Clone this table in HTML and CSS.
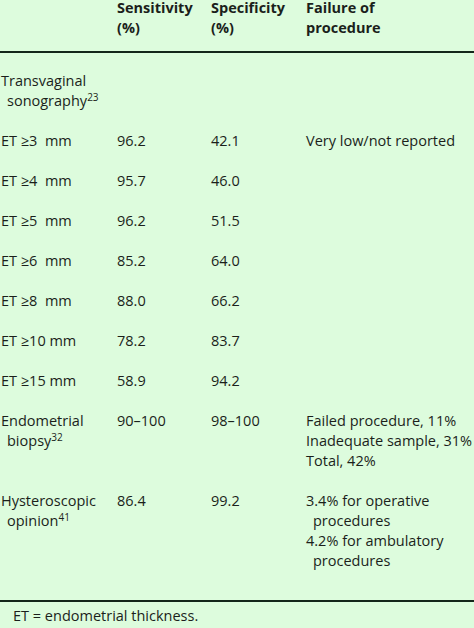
FILE: index.html
```html
<!DOCTYPE html>
<html>
<head>
<meta charset="utf-8">
<link rel="stylesheet" href="styles.css">
</head>
<body>
<table class="tbl">
  <colgroup>
    <col class="c1"><col class="c2"><col class="c3"><col class="c4">
  </colgroup>
  <thead>
    <tr>
      <th></th>
      <th>Sensitivity<br>(%)</th>
      <th>Specificity<br>(%)</th>
      <th>Failure of<br>procedure</th>
    </tr>
  </thead>
  <tbody>
    <tr class="first">
      <td class="lbl">Transvaginal sonography<sup>23</sup></td>
      <td></td><td></td><td></td>
    </tr>
    <tr><td class="lbl">ET ≥3&nbsp; mm</td><td>96.2</td><td>42.1</td><td class="fail"><span class="item">Very low/not reported</span></td></tr>
    <tr><td class="lbl">ET ≥4&nbsp; mm</td><td>95.7</td><td>46.0</td><td></td></tr>
    <tr><td class="lbl">ET ≥5&nbsp; mm</td><td>96.2</td><td>51.5</td><td></td></tr>
    <tr><td class="lbl">ET ≥6&nbsp; mm</td><td>85.2</td><td>64.0</td><td></td></tr>
    <tr><td class="lbl">ET ≥8&nbsp; mm</td><td>88.0</td><td>66.2</td><td></td></tr>
    <tr><td class="lbl">ET ≥10 mm</td><td>78.2</td><td>83.7</td><td></td></tr>
    <tr><td class="lbl">ET ≥15 mm</td><td>58.9</td><td>94.2</td><td></td></tr>
    <tr>
      <td class="lbl">Endometrial biopsy<sup>32</sup></td>
      <td>90–100</td><td>98–100</td>
      <td class="fail"><span class="item nw">Failed procedure, 11%</span><span class="item nw">Inadequate sample, 31%</span><span class="item nw">Total, 42%</span></td>
    </tr>
    <tr class="last">
      <td class="lbl">Hysteroscopic opinion<sup>41</sup></td>
      <td>86.4</td><td>99.2</td>
      <td class="fail"><span class="item">3.4% for operative procedures</span><span class="item">4.2% for ambulatory procedures</span></td>
    </tr>
  </tbody>
</table>
<p class="note">ET = endometrial thickness.</p>
</body>
</html>
```
FILE: styles.css
```css
html, body {
  margin: 0;
  padding: 0;
  background: #ddfcdd;
  overflow: hidden;
}
body {
  font-family: "Open Sans", "Liberation Sans", sans-serif;
  font-size: 14.5px;
  line-height: 20px;
  color: #1b1f1b;
  width: 474px;
  height: 628px;
}
.tbl {
  border-collapse: collapse;
  table-layout: fixed;
  width: 474px;
  margin-top: -2px;
}
.c1 { width: 117px; }
.c2 { width: 94px; }
.c3 { width: 95px; }
.c4 { width: 168px; }
th {
  text-align: left;
  font-weight: 700;
  vertical-align: top;
  padding: 0 0 13px 0;
  border-bottom: 2px solid #14261a;
}
td {
  vertical-align: top;
  padding: 10px 0;
  white-space: nowrap;
}
tr.first td { padding-top: 18px; }
tr.last td { padding-bottom: 29px; border-bottom: 2px solid #14261a; }
td.lbl {
  white-space: normal;
  padding-left: 7px;
  text-indent: -6px;
}
td.fail { white-space: normal; }
.item {
  display: block;
  padding-left: 7px;
  text-indent: -7px;
}
.item.nw { white-space: nowrap; }
sup {
  font-size: 10px;
  line-height: 0;
  vertical-align: 5px;
}
.note {
  margin: 0;
  padding: 4px 0 0 13px;
}
```
